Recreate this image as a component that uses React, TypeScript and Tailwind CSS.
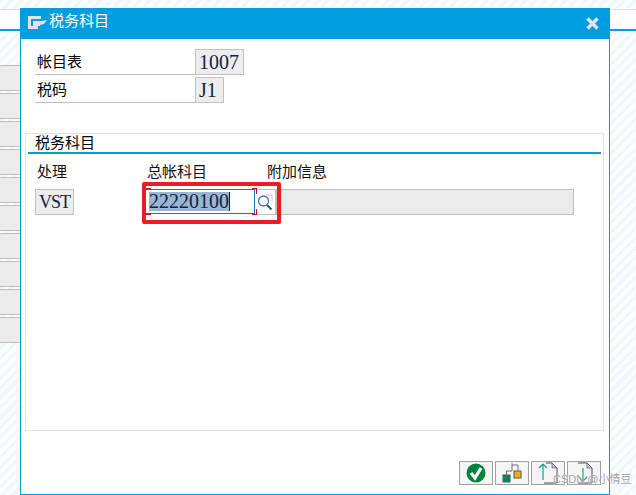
const cjk = "font-['Liberation_Serif','Noto_Sans_CJK_SC',serif]";
const stripes =
  "bg-[repeating-linear-gradient(135deg,#f0f7fb_0,#f0f7fb_3px,#fcfdfe_3px,#fcfdfe_7px)]";

function Field({ text, className }: { text: string; className: string }) {
  return (
    <div
      className={`h-[26px] bg-[#ededed] border border-[#c0c0c0] leading-[24px] text-[#15233a] ${className}`}
    >
      {text}
    </div>
  );
}

function FormRow({ label, value, width }: { label: string; value: string; width: string }) {
  return (
    <div className="flex">
      <div className="w-[160px] h-[26px] border-b border-[#bdbdbd] pl-[2px] text-[15px] leading-[27px] text-black">
        {label}
      </div>
      <Field text={value} className={`${width} pl-[3px] text-[20px]`} />
    </div>
  );
}

function TitleIcon() {
  return (
    <svg width="19" height="13" viewBox="0 0 19 13" className="shrink-0 -mt-[3px]">
      <path d="M0 0h13v3H3v7h7v3H0z" fill="#e4e4e4" />
      <path d="M5 5h9l5-1-3 4-4 1v1H5z" fill="#e4e4e4" />
    </svg>
  );
}

function CloseIcon() {
  return (
    <svg width="13" height="13" viewBox="0 0 13 13">
      <path d="M1.5 1.5l10 10M11.5 1.5l-10 10" stroke="#e6e6e6" strokeWidth="3.2" />
    </svg>
  );
}

function LensIcon() {
  return (
    <svg width="16" height="17" viewBox="0 0 16 17">
      <path d="M9 1h6v6" fill="none" stroke="#c8c8c8" strokeWidth="1" />
      <circle cx="6.5" cy="7" r="5" fill="#fff" stroke="#3f78a8" strokeWidth="1.3" />
      <path d="M10 11l4.5 4.5" stroke="#35506a" strokeWidth="2" />
    </svg>
  );
}

function CheckIcon() {
  return (
    <svg width="20" height="20" viewBox="0 0 20 20">
      <circle cx="10" cy="10" r="9.5" fill="#00843d" />
      <path d="M5 10l4 5 6-10" fill="none" stroke="#fff" strokeWidth="3.2" />
    </svg>
  );
}

function TreeIcon() {
  return (
    <svg width="20" height="20" viewBox="0 0 20 20">
      <path d="M4.5 13V8H10V2h6v7M10 2V0" fill="none" stroke="#7a6a80" strokeWidth="1" />
      <rect x="1" y="12" width="7" height="7" fill="#078a4b" stroke="#4a5a70" />
      <rect x="12" y="8" width="7" height="7" fill="#f0b000" stroke="#4a5a70" />
    </svg>
  );
}

function DocIcon({ down }: { down?: boolean }) {
  return (
    <svg width="22" height="22" viewBox="0 0 22 22">
      {down ? (
        <>
          <path d="M5 1h9l5 5v15H5" fill="none" stroke="#4a4a55" strokeWidth="1" />
          <path d="M14 1v5h5z" fill="#c9c4d8" stroke="#4a4a55" strokeWidth="0.6" />
          <path d="M10 6v13M6 15l4 4 4-4" fill="none" stroke="#16a37e" strokeWidth="1.2" />
        </>
      ) : (
        <>
          <path d="M9 1h6l5 5v15H7" fill="none" stroke="#4a4a55" strokeWidth="1" />
          <path d="M15 1v5h5z" fill="#c9c4d8" stroke="#4a4a55" strokeWidth="0.6" />
          <path d="M6 18V2M2 6l4-4 4 4" fill="none" stroke="#16a37e" strokeWidth="1.2" />
        </>
      )}
    </svg>
  );
}

function ToolButton({ children }: { children: React.ReactNode }) {
  return (
    <button className="w-[34px] h-[24px] flex items-center justify-center bg-[#f5f5f5] border border-[#a0a0a0]">
      {children}
    </button>
  );
}

export default function App() {
  return (
    <div className={`relative w-[636px] h-[495px] overflow-hidden ${cjk} ${stripes}`}>
      {/* page behind the dialog */}
      <div className="pt-[9px]">
        <div className="h-[22px] bg-white border-t border-[#e0e0e0] border-b-2 border-b-[#009de0]" />
        <div className="mt-[34px] w-[20px] flex flex-col gap-[2px]">
          {Array.from({ length: 10 }).map((_, i) => (
            <div key={i} className="h-[26px] bg-[#ececec] border-y border-[#bdbdbd]" />
          ))}
        </div>
      </div>

      {/* dialog */}
      <div className="absolute left-[20px] top-[8px] w-[590px] h-[487px] bg-white border border-[#009de0] border-t-0 flex flex-col">
        <div className="h-[31px] shrink-0 -mx-px bg-[#009de0] flex items-center pl-[8px] pr-[11px] text-white text-[15px]">
          <TitleIcon />
          <span className="ml-[2px] -mt-[4px]">税务科目</span>
          <span className="ml-auto flex">
            <CloseIcon />
          </span>
        </div>

        <div className="pt-[10px] pl-[14px] flex flex-col gap-[2px]">
          <FormRow label="帐目表" value="1007" width="w-[49px]" />
          <FormRow label="税码" value="J1" width="w-[29px]" />
        </div>

        <div className="relative mt-[30px] ml-[4px] w-[579px] h-[298px] border border-[#e2e2e2] px-[2px]">
          <div className="h-[19px] pl-[7px] text-[15px] leading-[18px] text-black">税务科目</div>
          <div className="h-[2px] -mt-px bg-[#009de0]" />
          <div className="flex pl-[9px] mt-[10px] h-[17px] text-[15px] leading-[17px] text-[#111]">
            <span className="w-[110px]">处理</span>
            <span className="w-[120px]">总帐科目</span>
            <span>附加信息</span>
          </div>
          <div className="flex mt-[8px] pl-[7px]">
            <Field text="VST" className="w-[39px] pl-[3px] text-[18px] tracking-[-1px]" />
            <div className="ml-[71px] relative w-[110px] h-[25px] bg-white border border-[#0a7ab8] pl-[3px] pt-[2px]">
              <span className="flex w-fit h-[19px] bg-[#9ab5d5] text-[20px] leading-[19px] text-[#15233a] border-r border-[#222]">
                22220100
              </span>
              <span className="absolute -left-[1px] -top-[2px] w-[6px] h-[3px] border-t border-l border-[#d00020]" />
              <span className="absolute -left-[1px] -bottom-[2px] w-[6px] h-[3px] border-b border-l border-[#d00020]" />
              <span className="absolute -right-[3px] -top-[2px] w-[5px] h-[6px] border-t border-r border-[#d00020]" />
              <span className="absolute -right-[3px] -bottom-[2px] w-[5px] h-[6px] border-b border-r border-[#d00020]" />
            </div>
            <div className="w-[21px] h-[26px] bg-white border-y border-r border-[#c0c0c0] flex items-center justify-center">
              <LensIcon />
            </div>
            <div className="w-[298px] h-[26px] bg-[#ebebeb] border border-[#c0c0c0]" />
          </div>
          {/* red annotation around the input */}
          <div className="absolute left-[116px] top-[48px] w-[139px] h-[42px] border-[4px] border-[#ed1c24] rounded-[2px]" />
        </div>

        <div className="mt-[30px] pr-[8px] flex justify-end gap-[2px]">
          <ToolButton>
            <CheckIcon />
          </ToolButton>
          <ToolButton>
            <TreeIcon />
          </ToolButton>
          <ToolButton>
            <DocIcon />
          </ToolButton>
          <ToolButton>
            <DocIcon down />
          </ToolButton>
        </div>
      </div>

      {/* image watermark */}
      <div className="absolute left-[553px] top-[472px] text-[11px] leading-[14px] font-['Liberation_Sans','Noto_Sans_CJK_SC',sans-serif] text-[#8a8a8a]/80 [text-shadow:0_0_2px_#fff] whitespace-nowrap">
        CSDN @小情豆
      </div>
    </div>
  );
}
